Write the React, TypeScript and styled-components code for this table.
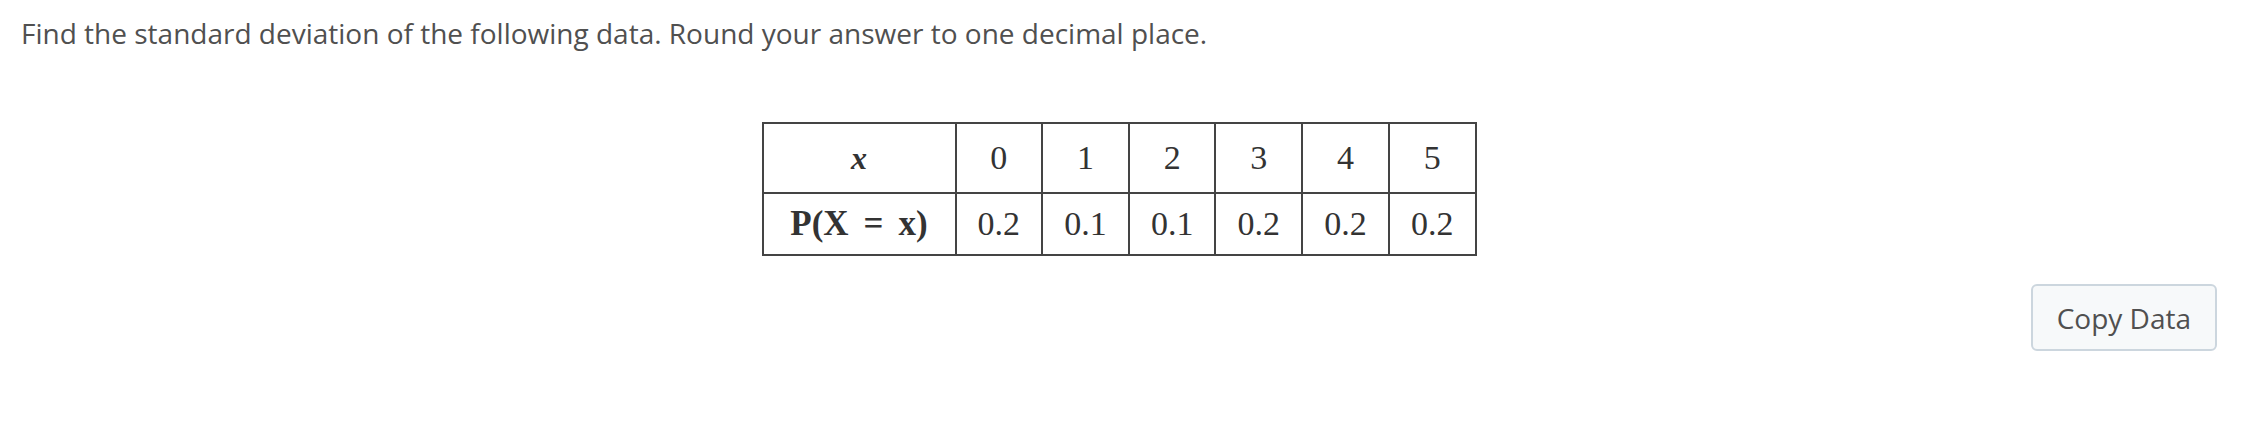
import React from "react";
import styled, { createGlobalStyle } from "styled-components";

const Global = createGlobalStyle`
  html, body { margin: 0; padding: 0; background: #fff; }
  body { font-family: "Open Sans", "Liberation Sans", sans-serif; }
`;

const Page = styled.div`
  display: flex;
  flex-direction: column;
  padding: 14px 39px 0 21px;
`;

const Prompt = styled.p`
  margin: 0;
  font-family: "Open Sans", sans-serif;
  font-size: 28px;
  line-height: 39px;
  color: #505050;
`;

const TableWrap = styled.div`
  display: flex;
  justify-content: center;
  margin-top: 69px;
`;

const DataTable = styled.table`
  border-collapse: collapse;
  table-layout: fixed;
  width: 715px;
  font-family: "Liberation Serif", "Times New Roman", serif;
  font-size: 34px;
  color: #333;
`;

const Row = styled.tr<{ $h: number }>`
  height: ${(p) => p.$h}px;
`;

const Cell = styled.td<{ $first?: boolean }>`
  border: 2px solid #444;
  text-align: center;
  vertical-align: middle;
  padding: 0;
  width: ${(p) => (p.$first ? "191px" : "auto")};
  white-space: nowrap;
`;

const VarX = styled.span`
  font-style: italic;
  font-weight: bold;
  font-size: 32px;
`;

const BoldLabel = styled.span`
  font-weight: bold;
  font-size: 35px;
`;

const Eq = styled.span`
  margin: 0 15px;
`;

const ButtonRow = styled.div`
  display: flex;
  justify-content: flex-end;
  margin-top: 28px;
`;

const CopyButton = styled.button`
  height: 67px;
  padding: 0 24px;
  border: 2px solid #ccd6de;
  border-radius: 6px;
  background: #f7f9fa;
  font-family: "Open Sans", sans-serif;
  font-size: 28px;
  color: #505050;
  cursor: pointer;
`;

const xs = ["0", "1", "2", "3", "4", "5"];
const ps = ["0.2", "0.1", "0.1", "0.2", "0.2", "0.2"];

export default function App() {
  return (
    <>
      <Global />
      <Page>
        <Prompt>
          Find the standard deviation of the following data. Round your answer to one decimal place.
        </Prompt>
        <TableWrap>
          <DataTable>
            <tbody>
              <Row $h={70}>
                <Cell $first>
                  <VarX>x</VarX>
                </Cell>
                {xs.map((v) => (
                  <Cell key={v}>{v}</Cell>
                ))}
              </Row>
              <Row $h={62}>
                <Cell $first>
                  <BoldLabel>
                    P(X<Eq>=</Eq>x)
                  </BoldLabel>
                </Cell>
                {ps.map((v, i) => (
                  <Cell key={i}>{v}</Cell>
                ))}
              </Row>
            </tbody>
          </DataTable>
        </TableWrap>
        <ButtonRow>
          <CopyButton>Copy Data</CopyButton>
        </ButtonRow>
      </Page>
    </>
  );
}
